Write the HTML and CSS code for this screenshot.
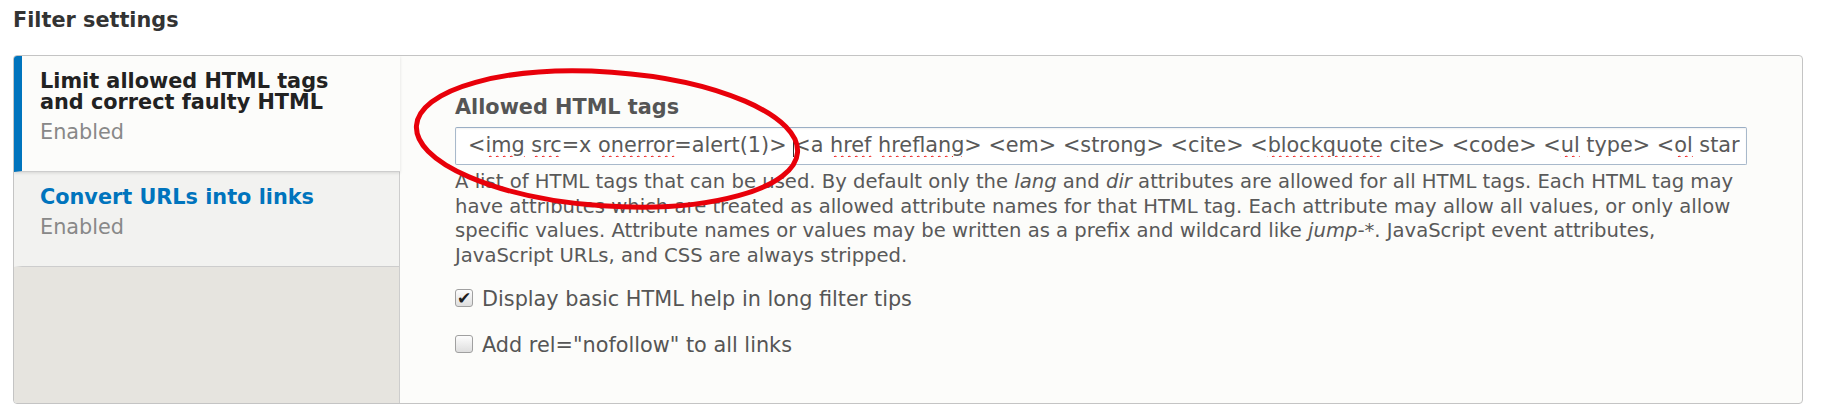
FILE: index.html
```html
<!DOCTYPE html>
<html lang="en">
  <head>
    <meta charset="UTF-8">
    <title>Filter settings</title>
    <link rel="stylesheet" href="styles.css">
  </head>
  <body>
    <h2 class="section-title">Filter settings</h2>

    <div class="vtabs">
        <ul class="vtabs-menu">
            <li class="vtab is-active">
                <span class="vtab-title">Limit allowed HTML tags and correct faulty HTML</span>
                <span class="vtab-summary">Enabled</span>
            </li>
            <li class="vtab">
                <span class="vtab-title">Convert URLs into links</span>
                <span class="vtab-summary">Enabled</span>
            </li>
        </ul>

        <div class="vtabs-pane">
            <label class="field-label">Allowed HTML tags</label>
            <div class="text-input">
                <div class="text-input-inner">&lt;<span class="typo">img</span> <span class="typo">src</span>=x <span class="typo">onerror</span>=alert(1)&gt; <span class="caret"></span>&lt;a <span class="typo">href</span> <span class="typo">hreflang</span>&gt; &lt;em&gt; &lt;strong&gt; &lt;cite&gt; &lt;<span class="typo">blockquote</span> cite&gt; &lt;code&gt; &lt;<span class="typo">ul</span> type&gt; &lt;<span class="typo">ol</span> start type&gt; &lt;li&gt; &lt;dl&gt; &lt;dt&gt; &lt;dd&gt; &lt;h2 id&gt; &lt;h3 id&gt;</div>
            </div>
            <div class="description">
                A list of HTML tags that can be used. By default only the <em>lang</em> and <em>dir</em> attributes are allowed for all HTML tags. Each HTML tag may have attributes which are treated as allowed attribute names for that HTML tag. Each attribute may allow all values, or only allow specific values. Attribute names or values may be written as a prefix and wildcard like <em>jump-*</em>. JavaScript event attributes, JavaScript URLs, and CSS are always stripped.
            </div>

            <div class="check-row">
                <span class="check is-checked">&#10004;</span>
                <span class="check-label">Display basic HTML help in long filter tips</span>
            </div>
            <div class="check-row">
                <span class="check"></span>
                <span class="check-label">Add rel="nofollow" to all links</span>
            </div>
        </div>
    </div>

    <!-- red annotation drawn over the screenshot -->
    <svg class="annotation" width="1821" height="419" viewBox="0 0 1821 419">
        <ellipse cx="607" cy="139" rx="191" ry="67" transform="rotate(4 607 139)"
                 fill="none" stroke="#e8000a" stroke-width="5"/>
    </svg>
  </body>
</html>
```

FILE: styles.css
```css
body {
    margin: 0;
    padding: 8px 18px 0 13px;
    position: relative;
    font-family: "DejaVu Sans", Verdana, sans-serif;
    font-size: 20.8px;
    background: #fff;
    color: #333;
}

.section-title {
    margin: 0 0 23px;
    font-size: 20.8px;
    font-weight: bold;
    color: #333;
}

.vtabs {
    display: flex;
    border: 1px solid #c4c4c4;
    border-radius: 4px;
    background: #fcfcfa;
    overflow: hidden;
}

.vtabs-menu {
    flex: 0 0 386px;
    box-sizing: border-box;
    margin: 0;
    padding: 0;
    list-style: none;
    background: #e6e4df;
    border-right: 1px solid #cdcdcd;
}

.vtab {
    padding: 15px 49px 23px 18px;
    border-left: 8px solid transparent;
    border-bottom: 1px solid #cdcdcd;
    background: #f2f2f0;
}

.vtab.is-active {
    position: relative;
    margin-right: -1px;
    background: #fcfcfa;
    border-left-color: #0074bd;
    box-shadow: 0 1px 3px rgba(0, 0, 0, 0.12);
}

.vtab-title {
    display: block;
    font-weight: bold;
    line-height: 21px;
    color: #0074bd;
}

.vtab.is-active .vtab-title {
    color: #222;
}

.vtab-summary {
    display: block;
    margin-top: 4px;
    line-height: 31px;
    color: #888;
}

.vtabs-pane {
    flex: 1;
    min-width: 0;
    padding: 39px 55px 45px;
}

.field-label {
    display: block;
    margin-bottom: 7px;
    font-weight: bold;
    line-height: 25px;
    color: #555;
}

.text-input {
    height: 38px;
    box-sizing: border-box;
    padding: 5px 6px 5px 12px;
    border: 1px solid #a8b9cb;
    border-top-color: #9aaec4;
    border-radius: 2px;
    background: #fff;
    box-shadow: inset 0 1px 2px rgba(0, 0, 0, 0.06);
    color: #595959;
    line-height: 24px;
}

.text-input-inner {
    overflow: hidden;
    white-space: nowrap;
}

.typo {
    text-decoration: underline wavy #e00;
    text-decoration-thickness: 1px;
    text-underline-offset: 3px;
}

.caret {
    display: inline-block;
    width: 1px;
    height: 22px;
    margin-right: -1px;
    background: #333;
    vertical-align: -5px;
}

.description {
    margin-top: 5px;
    font-size: 19.6px;
    line-height: 24.6px;
    color: #595959;
}

.check-row {
    display: flex;
    align-items: flex-start;
    gap: 9px;
    margin-top: 21px;
    line-height: 25px;
    color: #555;
}

.description + .check-row {
    margin-top: 19px;
}

.check {
    flex: 0 0 18px;
    height: 18px;
    box-sizing: border-box;
    margin-top: 2px;
    border: 1px solid #a0a0a0;
    border-radius: 3px;
    background: linear-gradient(#fdfdfd, #dedede);
    color: #1e1e1e;
    font-size: 17px;
    line-height: 16px;
    text-align: center;
    overflow: hidden;
}

.annotation {
    position: absolute;
    left: 0;
    top: 0;
    pointer-events: none;
}
```
